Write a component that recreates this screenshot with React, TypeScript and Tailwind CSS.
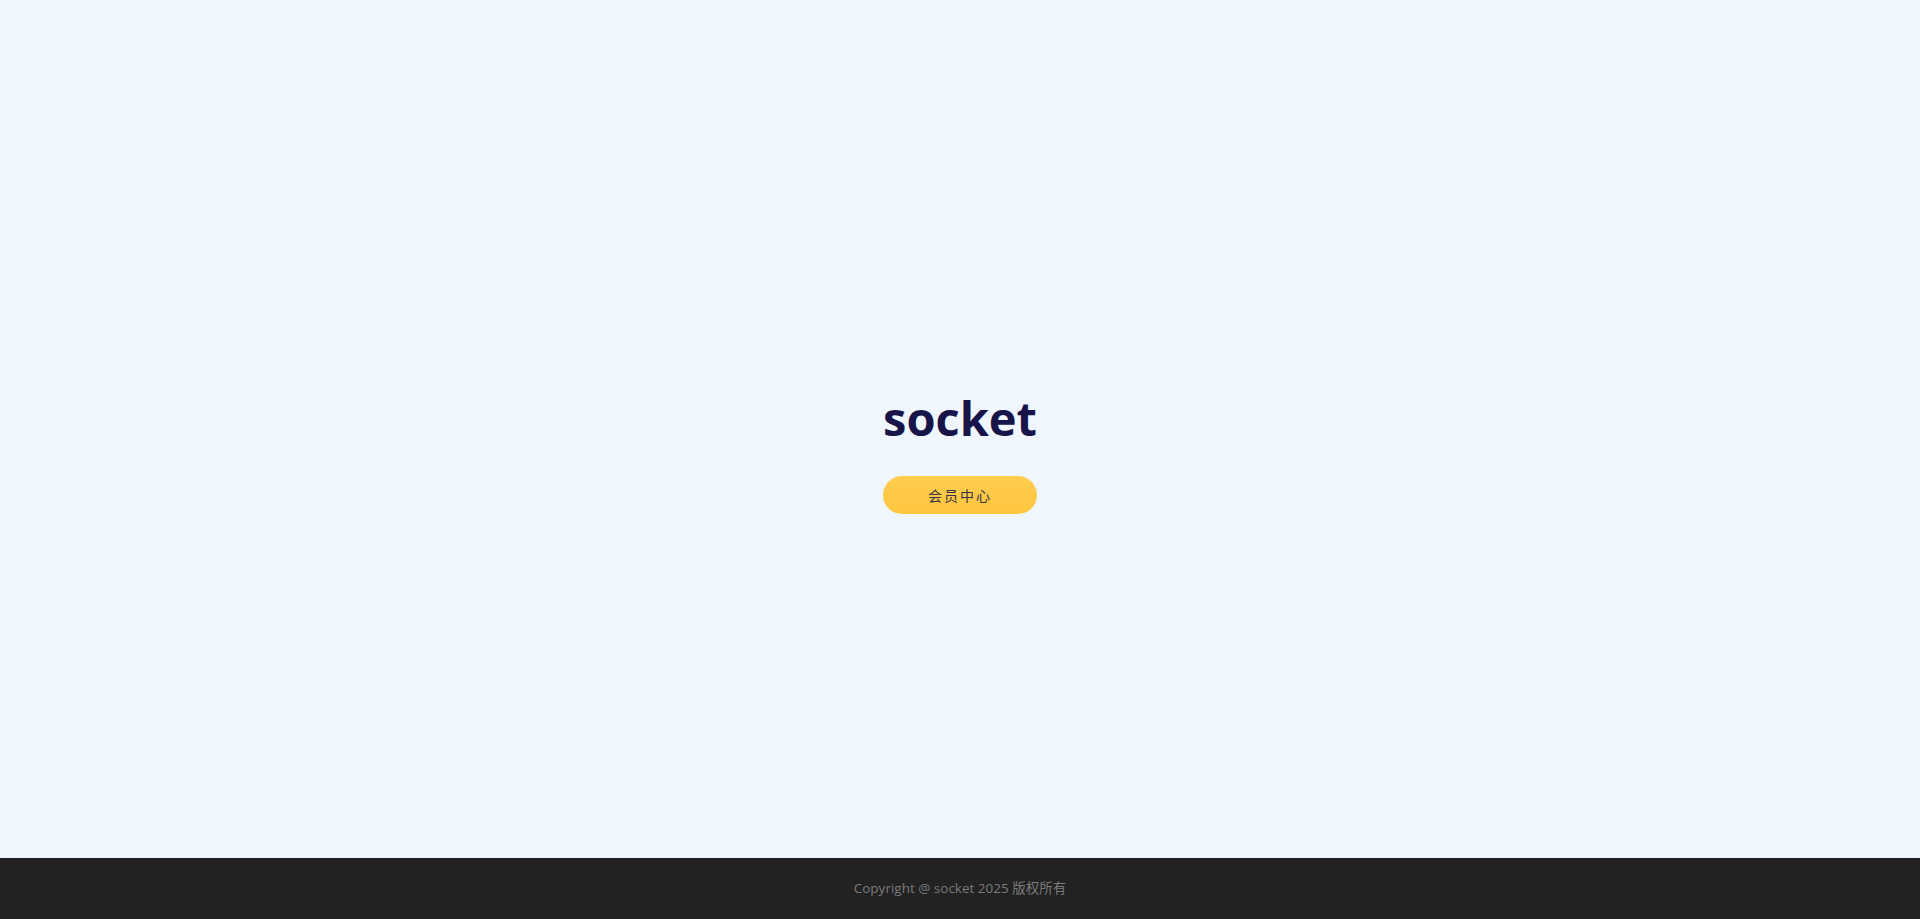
export default function App() {
  return (
    <div className="flex h-[919px] w-full flex-col bg-[#f0f6fe] font-['Noto_Sans','Open_Sans','Noto_Sans_CJK_SC',sans-serif]">
      <main className="flex flex-1 flex-col items-center pt-[387px]">
        <h1 className="font-['Open_Sans','Noto_Sans',sans-serif] text-[47px] font-bold leading-[62px] text-[#17144a]">
          socket
        </h1>
        <button className="mt-[27px] flex h-[38px] w-[154px] items-center justify-center rounded-full bg-gradient-to-b from-[#ffcd4f] to-[#ffc53c] font-['Noto_Sans_CJK_SC',sans-serif] text-[14px] tracking-[2px] text-[#35354a]">
          会员中心
        </button>
      </main>
      <footer className="flex h-[61px] items-center justify-center bg-[#222222] font-['Open_Sans','Noto_Sans_CJK_SC',sans-serif] text-[13.5px] text-[#7a7a7a]">
        Copyright @ socket 2025 版权所有
      </footer>
    </div>
  );
}
